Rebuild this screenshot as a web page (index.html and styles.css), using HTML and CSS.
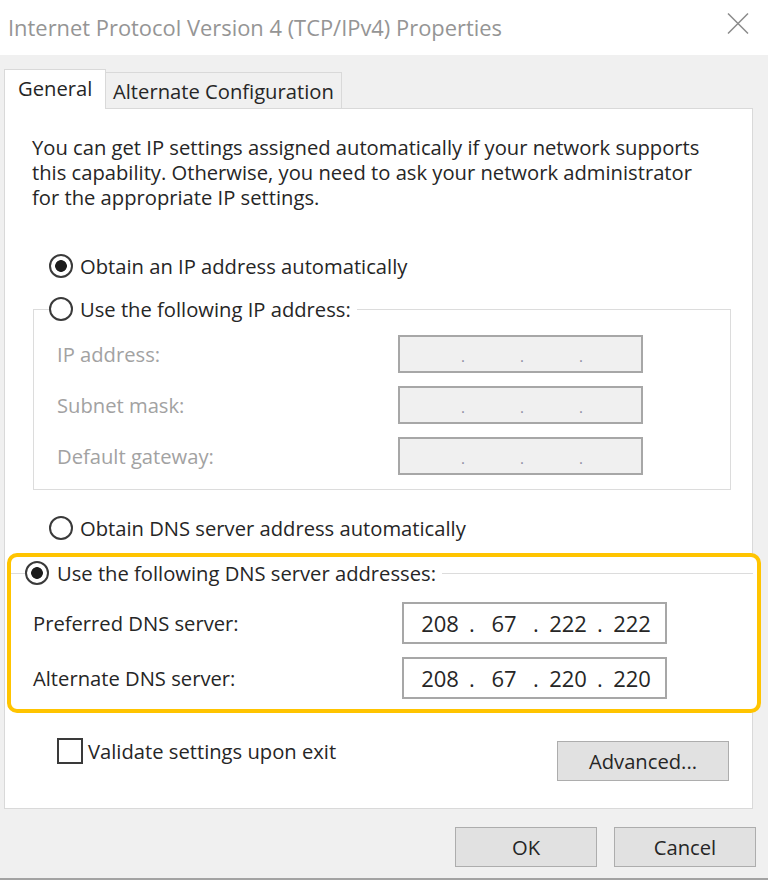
FILE: index.html
```html
<!DOCTYPE html>
<html lang="en">
<head>
<meta charset="utf-8">
<title>Internet Protocol Version 4 (TCP/IPv4) Properties</title>
<link rel="stylesheet" href="styles.css">
</head>
<body>
<div class="window">
  <header class="titlebar">
    <span class="title">Internet Protocol Version 4 (TCP/IPv4) Properties</span>
    <span class="close" aria-label="Close">
      <svg viewBox="0 0 22 21" width="22" height="21"><path d="M1 0.5L21 20.5M21 0.5L1 20.5" stroke="#8c8c8c" stroke-width="1.5" fill="none"/></svg>
    </span>
  </header>

  <main class="content">
    <nav class="tabs">
      <div class="tab active">General</div>
      <div class="tab">Alternate Configuration</div>
    </nav>

    <section class="panel">
      <p class="intro">You can get IP settings assigned automatically if your network supports<br>this capability. Otherwise, you need to ask your network administrator<br>for the appropriate IP settings.</p>

      <label class="option indent"><input type="radio" name="ip" class="radio" checked>Obtain an IP address automatically</label>

      <fieldset class="group">
        <legend><label class="option"><input type="radio" name="ip" class="radio">Use the following IP address:</label></legend>
        <div class="rows">
          <div class="row disabled">
            <span class="label">IP address:</span>
            <span class="ipbox"><span class="oct"></span><span class="dot">.</span><span class="oct"></span><span class="dot">.</span><span class="oct"></span><span class="dot">.</span><span class="oct"></span></span>
          </div>
          <div class="row disabled">
            <span class="label">Subnet mask:</span>
            <span class="ipbox"><span class="oct"></span><span class="dot">.</span><span class="oct"></span><span class="dot">.</span><span class="oct"></span><span class="dot">.</span><span class="oct"></span></span>
          </div>
          <div class="row disabled">
            <span class="label">Default gateway:</span>
            <span class="ipbox"><span class="oct"></span><span class="dot">.</span><span class="oct"></span><span class="dot">.</span><span class="oct"></span><span class="dot">.</span><span class="oct"></span></span>
          </div>
        </div>
      </fieldset>

      <label class="option indent dns-auto"><input type="radio" name="dns" class="radio">Obtain DNS server address automatically</label>

      <div class="highlight">
        <fieldset class="group dns">
          <legend><label class="option"><input type="radio" name="dns" class="radio" checked>Use the following DNS server addresses:</label></legend>
          <div class="rows">
            <div class="row">
              <span class="label">Preferred DNS server:</span>
              <span class="ipbox"><span class="oct">208</span><span class="dot">.</span><span class="oct">67</span><span class="dot">.</span><span class="oct">222</span><span class="dot">.</span><span class="oct">222</span></span>
            </div>
            <div class="row">
              <span class="label">Alternate DNS server:</span>
              <span class="ipbox"><span class="oct">208</span><span class="dot">.</span><span class="oct">67</span><span class="dot">.</span><span class="oct">220</span><span class="dot">.</span><span class="oct">220</span></span>
            </div>
          </div>
        </fieldset>
      </div>

      <div class="panel-footer">
        <label class="check"><input type="checkbox" class="checkbox">Validate settings upon exit</label>
        <button class="btn advanced" type="button">Advanced...</button>
      </div>
    </section>

    <div class="actions">
      <button class="btn" type="button">OK</button>
      <button class="btn" type="button">Cancel</button>
    </div>
  </main>
</div>
</body>
</html>
```

FILE: styles.css
```css
* {
  box-sizing: border-box;
}

html, body {
  margin: 0;
  padding: 0;
}

body {
  background: #f0f0f0;
  font-family: "Open Sans", "Liberation Sans", sans-serif;
  font-size: 20.2px;
  color: #262626;
}

.window {
  width: 768px;
  height: 880px;
  border-bottom: 2px solid #a3a3a3;
  display: flex;
  flex-direction: column;
}

/* title bar */
.titlebar {
  height: 55px;
  background: #fff;
  display: flex;
  align-items: center;
  justify-content: space-between;
  padding-left: 8px;
}

.title {
  font-size: 21.9px;
  color: #959595;
  white-space: nowrap;
}

.close {
  align-self: flex-start;
  margin: 13px 19px 0 0;
  display: flex;
}

.content {
  padding-left: 4px;
}

/* tabs */
.tabs {
  display: flex;
  align-items: flex-end;
  margin-top: 14px;
  height: 39px;
}

.tab {
  height: 36px;
  width: 236px;
  padding-left: 7px;
  display: flex;
  align-items: center;
  border: 1px solid #d9d9d9;
  border-bottom: none;
  border-left: none;
  background: #f0f0f0;
  white-space: nowrap;
}

.tab.active {
  position: relative;
  z-index: 1;
  width: 102px;
  height: 40px;
  margin-bottom: -1px;
  padding-left: 13px;
  padding-bottom: 3px;
  border-left: 1px solid #d9d9d9;
  background: #fff;
}

/* tab page */
.panel {
  width: 749px;
  height: 701px;
  background: #fff;
  border: 1px solid #d9d9d9;
}

.intro {
  margin: 26px 0 0 27px;
  line-height: 25px;
  white-space: nowrap;
}

.option {
  display: flex;
  align-items: center;
  height: 30px;
  white-space: nowrap;
}

.option.indent {
  margin: 41px 0 0 44px;
}

.option.dns-auto {
  margin-top: 23px;
}

.radio {
  appearance: none;
  -webkit-appearance: none;
  width: 24px;
  height: 24px;
  margin: 0 7px 0 0;
  border: 2px solid #3a3a3a;
  border-radius: 50%;
  background: #fff;
  flex: none;
}

.radio:checked {
  background: radial-gradient(circle, #1c1c1c 0 5.5px, #fff 6.2px);
}

/* group boxes */
.group {
  margin: 13px 0 0 28px;
  width: 698px;
  padding: 0 0 14px 0;
  border: 1px solid #dcdcdc;
  min-width: 0;
}

.group legend {
  margin-left: 15px;
  padding: 0 6px 0 0;
}

.rows {
  display: flex;
  flex-direction: column;
  gap: 13px;
  margin-top: 11px;
}

.row {
  display: flex;
  align-items: center;
  padding-left: 23px;
  white-space: nowrap;
}

.row .label {
  width: 341px;
}

.row.disabled .label {
  color: #a2a2a2;
}

.ipbox {
  display: flex;
  width: 245px;
  height: 38px;
  padding: 0 0 0 10px;
  border: 2px solid #a7a7a7;
  background: #fff;
  align-items: center;
  font-size: 22px;
}

.row.disabled .ipbox {
  background: #f0f0f0;
}

.oct {
  width: 47px;
  text-align: center;
}

.dot {
  width: 12px;
  text-align: center;
}

.row.disabled .dot {
  color: #8c8ca0;
  font-size: 15px;
  padding-top: 4px;
}

/* highlighted DNS section */
.highlight {
  position: relative;
  z-index: 1;
  height: 160px;
  margin: 10px -9px 0 2px;
  border: 4px solid #ffc400;
  border-radius: 10px;
  background: #fff;
}

.group.dns {
  margin: 1px 4px 0 0;
  width: auto;
  padding: 0;
  border: none;
  border-top: 1px solid #dcdcdc;
}

.group.dns legend {
  margin-left: 14px;
  padding-right: 6px;
}

.group.dns .radio {
  margin-right: 8px;
}

.group.dns .rows {
  margin-top: 14px;
}

.group.dns .row {
  padding-left: 22px;
}

.group.dns .label {
  width: 369px;
}

.group.dns .ipbox {
  width: 265px;
  height: 42px;
  padding-left: 10px;
}

.group.dns .oct {
  width: 52px;
}

/* footer inside the tab page */
.panel-footer {
  display: flex;
  justify-content: space-between;
  align-items: flex-start;
  margin-top: 25px;
  padding: 0 23px 0 52px;
}

.check {
  display: flex;
  align-items: center;
  height: 25px;
  white-space: nowrap;
}

.checkbox {
  appearance: none;
  -webkit-appearance: none;
  width: 26px;
  height: 26px;
  margin: 0 5px 0 0;
  border: 2px solid #3a3a3a;
  background: #fff;
}

.btn {
  font: inherit;
  color: #262626;
  width: 142px;
  height: 40px;
  padding: 0;
  background: #e1e1e1;
  border: 1px solid #adadad;
}

.btn.advanced {
  width: 172px;
  margin-top: 3px;
}

/* dialog buttons */
.actions {
  display: flex;
  justify-content: flex-end;
  gap: 17px;
  margin-top: 18px;
  padding-right: 12px;
}
```
